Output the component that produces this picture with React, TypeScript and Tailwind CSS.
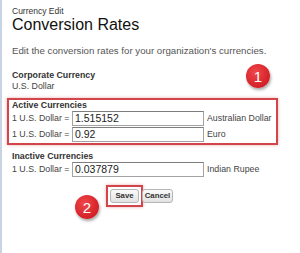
const RATES_ACTIVE = [
  { value: "1.515152", name: "Australian Dollar" },
  { value: "0.92", name: "Euro" },
];

const RATES_INACTIVE = [{ value: "0.037879", name: "Indian Rupee" }];

function RateRow({ value, name }: { value: string; name: string }) {
  return (
    <div className="flex h-[15px] items-center">
      <span className="w-[60px] text-[8.8px] leading-[15px] text-[#444]">1 U.S. Dollar =</span>
      <div className="flex h-[15px] w-[132px] items-center border border-[#a3a3a3] border-t-[#7d7d7d] bg-white pl-[2px] text-[10.5px] text-[#222]">
        {value}
      </div>
      <span className="ml-[3px] text-[8.8px] text-[#444]">{name}</span>
    </div>
  );
}

function Badge({ n, className }: { n: string; className: string }) {
  return (
    <div
      className={`absolute flex h-[24px] w-[24px] items-center justify-center rounded-full bg-[radial-gradient(circle_at_40%_35%,#f0474b,#d32027_70%,#b8161c)] text-[15px] leading-none text-white shadow-[1px_2px_3px_rgba(0,0,0,0.35)] ${className}`}
    >
      {n}
    </div>
  );
}

export default function App() {
  return (
    <div className="relative h-[253px] w-[300px] overflow-hidden border-l-2 border-[#c8d4e3] bg-white pl-[10px] pt-[7px] font-['Liberation_Sans',Arial,sans-serif]">
      <div className="text-[8.5px] leading-[9px] text-[#333]">Currency Edit</div>
      <h1 className="text-[16px] leading-[18px] text-[#111]">Conversion Rates</h1>

      <p className="mt-[11px] text-[9.7px] leading-[12px] text-[#555]">
        Edit the conversion rates for your organization's currencies.
      </p>

      {/* Corporate */}
      <div className="mt-[13px] text-[8.8px] font-bold leading-[11px] text-[#333]">Corporate Currency</div>
      <div className="text-[8.8px] leading-[11px] text-[#444]">U.S. Dollar</div>

      {/* Active, highlighted */}
      <div className="-ml-[5px] mt-[6px] w-[271px] border-2 border-[#d2454a] pb-[1px] pl-[3px] shadow-[0_0_3px_rgba(210,69,74,0.45)]">
        <div className="text-[8.8px] font-bold leading-[11px] text-[#333]">Active Currencies</div>
        <div className="flex flex-col gap-[1px]">
          {RATES_ACTIVE.map((r) => (
            <RateRow key={r.name} value={r.value} name={r.name} />
          ))}
        </div>
      </div>

      {/* Inactive */}
      <div className="mt-[6px] text-[8.8px] font-bold leading-[11px] text-[#333]">Inactive Currencies</div>
      {RATES_INACTIVE.map((r) => (
        <RateRow key={r.name} value={r.value} name={r.name} />
      ))}

      {/* Buttons */}
      <div className="ml-[94px] mt-[8px] flex items-center">
        <div className="flex h-[22px] w-[37px] items-center justify-center border-2 border-[#d2454a] shadow-[0_0_3px_rgba(210,69,74,0.45)]">
          <button className="h-[14px] w-[29px] rounded-[3px] border border-[#b5b5b5] bg-gradient-to-b from-[#fafafa] to-[#e2e2e2] text-[7.8px] font-bold leading-[12px] text-[#333]">
            Save
          </button>
        </div>
        <button className="-ml-[1px] h-[14px] w-[31px] rounded-[3px] border border-[#b5b5b5] bg-gradient-to-b from-[#fafafa] to-[#e2e2e2] text-[7.8px] font-bold leading-[12px] text-[#333]">
          Cancel
        </button>
      </div>

      <Badge n="1" className="left-[244px] top-[64px]" />
      <Badge n="2" className="left-[73px] top-[195px]" />
    </div>
  );
}
